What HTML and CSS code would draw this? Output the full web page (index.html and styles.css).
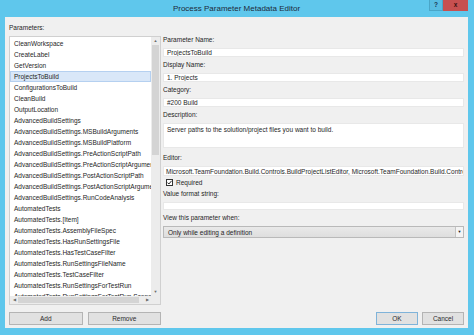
FILE: index.html
```html
<!DOCTYPE html>
<html lang="en">
<head>
  <meta charset="UTF-8" />
  <title>Process Parameter Metadata Editor</title>
  <link rel="stylesheet" href="styles.css">
</head>
<body>

  <div class="window">
    <div class="titlebar">
      <span></span>
      <span class="title">Process Parameter Metadata Editor</span>
      <div class="caption-buttons">
        <span class="cap-help">?</span>
        <span class="cap-close">x</span>
      </div>
    </div>

    <div class="client">
      <div class="left">
        <div class="label">Parameters:</div>
        <div class="listbox">
          <div class="items">
            <div class="item">CleanWorkspace</div>
            <div class="item">CreateLabel</div>
            <div class="item">GetVersion</div>
            <div class="item selected">ProjectsToBuild</div>
            <div class="item">ConfigurationsToBuild</div>
            <div class="item">CleanBuild</div>
            <div class="item">OutputLocation</div>
            <div class="item">AdvancedBuildSettings</div>
            <div class="item">AdvancedBuildSettings.MSBuildArguments</div>
            <div class="item">AdvancedBuildSettings.MSBuildPlatform</div>
            <div class="item">AdvancedBuildSettings.PreActionScriptPath</div>
            <div class="item">AdvancedBuildSettings.PreActionScriptArguments</div>
            <div class="item">AdvancedBuildSettings.PostActionScriptPath</div>
            <div class="item">AdvancedBuildSettings.PostActionScriptArguments</div>
            <div class="item">AdvancedBuildSettings.RunCodeAnalysis</div>
            <div class="item">AutomatedTests</div>
            <div class="item">AutomatedTests.[Item]</div>
            <div class="item">AutomatedTests.AssemblyFileSpec</div>
            <div class="item">AutomatedTests.HasRunSettingsFile</div>
            <div class="item">AutomatedTests.HasTestCaseFilter</div>
            <div class="item">AutomatedTests.RunSettingsFileName</div>
            <div class="item">AutomatedTests.TestCaseFilter</div>
            <div class="item">AutomatedTests.RunSettingsForTestRun</div>
            <div class="item">AutomatedTests.RunSettingsForTestRun.ScopeFilter</div>
          </div>
          <div class="vscroll">
            <span class="arrow">&#9650;</span>
            <div class="vthumb"></div>
            <span class="arrow">&#9660;</span>
          </div>
          <div class="hscroll">
            <span class="arrow">&#9664;</span>
            <div class="hthumb"></div>
            <span class="arrow">&#9654;</span>
          </div>
          <div class="corner"></div>
        </div>
        <div class="buttons">
          <button class="btn wide">Add</button>
          <button class="btn wide">Remove</button>
        </div>
      </div>

      <div class="right">
        <div class="label">Parameter Name:</div>
        <div class="textbox">ProjectsToBuild</div>
        <div class="label">Display Name:</div>
        <div class="textbox">1. Projects</div>
        <div class="label">Category:</div>
        <div class="textbox">#200 Build</div>
        <div class="label">Description:</div>
        <div class="textbox multiline">Server paths to the solution/project files you want to build.</div>
        <div class="label">Editor:</div>
        <div class="textbox editor">Microsoft.TeamFoundation.Build.Controls.BuildProjectListEditor, Microsoft.TeamFoundation.Build.Controls</div>
        <label class="check-row">
          <svg class="checkbox" width="7" height="7" viewBox="0 0 7 7">
            <rect x="0.5" y="0.5" width="6" height="6" fill="#fff" stroke="#333"/>
            <path d="M1.5 3.6 L2.9 5 L5.6 1.8" fill="none" stroke="#222" stroke-width="1"/>
          </svg>
          Required
        </label>
        <div class="label">Value format string:</div>
        <div class="textbox short"></div>
        <div class="label">View this parameter when:</div>
        <div class="dropdown">
          <span>Only while editing a definition</span>
          <span class="drop-arrow">&#9660;</span>
        </div>
        <div class="buttons right-buttons">
          <button class="btn default">OK</button>
          <button class="btn">Cancel</button>
        </div>
      </div>
    </div>
  </div>

</body>
</html>
```

FILE: styles.css
```css
:root {
  --frame: #5fc7ec;
  --face: #f0f0f0;
  --text: #1e1e1e;
  --line: #e3e3e3;
}

* {
  box-sizing: border-box;
  margin: 0;
  padding: 0;
}

body {
  width: 474px;
  height: 335px;
  overflow: hidden;
  font-family: 'Liberation Sans', Arial, sans-serif;
  font-size: 6.5px;
  color: var(--text);
}

.window {
  display: flex;
  flex-direction: column;
  width: 474px;
  height: 335px;
  background: var(--frame);
  padding: 0 6px 7px 5px;
}

/* title bar */
.titlebar {
  height: 17px;
  flex-shrink: 0;
  display: grid;
  grid-template-columns: 1fr auto 1fr;
  align-items: start;
}

.title {
  font-size: 8px;
  line-height: 17px;
  color: #1d2a3a;
}

.caption-buttons {
  justify-self: end;
  display: flex;
}

.cap-help,
.cap-close {
  height: 11px;
  line-height: 10px;
  text-align: center;
  font-weight: bold;
  font-size: 6.5px;
}

.cap-help {
  width: 14px;
  background: #58bde2;
  border: 1px solid #4aa6c8;
  border-top: none;
  color: #1b3550;
}

.cap-close {
  width: 25px;
  background: #c75050;
  color: #3a1111;
}

/* client area */
.client {
  flex: 1;
  min-height: 0;
  background: var(--face);
  display: grid;
  grid-template-columns: 152px 301px;
  grid-template-rows: minmax(0, 1fr);
  column-gap: 2px;
  padding: 7px 4px 3px 4px;
}

.left,
.right {
  display: flex;
  flex-direction: column;
  min-height: 0;
}

.label {
  height: 8px;
  line-height: 8px;
  margin-bottom: 4px;
  white-space: nowrap;
}

.right {
  padding-top: 12px;
}

/* list box */
.listbox {
  flex: 1;
  min-height: 0;
  overflow: hidden;
  display: grid;
  grid-template-columns: minmax(0, 1fr) 9px;
  grid-template-rows: minmax(0, 1fr) 8px;
  background: #fff;
  border: 1px solid #d0d0d0;
}

.items {
  overflow: hidden;
  padding-top: 1px;
}

.item {
  height: 11px;
  padding-left: 3px;
  white-space: nowrap;
  border: 1px solid transparent;
  line-height: 9px;
}

.item.selected {
  background: #d9e7f8;
  border-color: #b5d0f0;
}

.vscroll {
  background: #ececec;
  display: flex;
  flex-direction: column;
  align-items: center;
  overflow: hidden;
}

.vthumb {
  width: 7px;
  height: 110px;
  background: #d4d4d4;
  margin-bottom: auto;
}

.hscroll {
  background: #ececec;
  display: flex;
  align-items: center;
  overflow: hidden;
}

.hthumb {
  flex: 1;
  height: 6px;
  background: #d4d4d4;
  margin-right: 4px;
}

.arrow {
  font-size: 4px;
  line-height: 8px;
  width: 8px;
  flex-shrink: 0;
  text-align: center;
  color: #6a6a6a;
}

.corner {
  background: #ececec;
}

/* buttons */
.buttons {
  display: flex;
  gap: 5px;
  margin-top: 7px;
  flex-shrink: 0;
}

.btn {
  height: 13px;
  font-family: inherit;
  font-size: 6.5px;
  color: #2a2a2a;
  background: #e1e1e1;
  border: 1px solid #b4b4b4;
}

.btn.wide {
  flex: 1;
}

.right-buttons {
  margin-top: auto;
  justify-content: flex-end;
  gap: 4px;
}

.right-buttons .btn {
  width: 42px;
}

.btn.default {
  border-color: #7fb3d9;
}

/* text fields */
.textbox {
  height: 9px;
  line-height: 8px;
  background: #fff;
  border: 1px solid #e8e8e8;
  padding-left: 3px;
  margin-bottom: 4px;
  white-space: nowrap;
  overflow: hidden;
  flex-shrink: 0;
}

.textbox.multiline {
  height: 25px;
  line-height: 9px;
  padding-top: 1px;
  margin-bottom: 6px;
}

.textbox.editor {
  height: 10px;
  line-height: 9px;
  margin-bottom: 2px;
  padding-left: 2px;
}

.textbox.short {
  height: 8px;
}

.check-row {
  display: flex;
  align-items: center;
  gap: 3px;
  height: 8px;
  margin-bottom: 4px;
  padding-left: 3px;
}

.dropdown {
  display: flex;
  justify-content: space-between;
  align-items: center;
  height: 12px;
  padding-left: 4px;
  background: linear-gradient(#e9e9e9, #dedede);
  border: 1px solid #b9b9b9;
  flex-shrink: 0;
}

.drop-arrow {
  width: 8px;
  height: 10px;
  line-height: 10px;
  text-align: center;
  font-size: 4px;
  background: #f4f4f4;
  border-left: 1px solid #c4c4c4;
}
```
